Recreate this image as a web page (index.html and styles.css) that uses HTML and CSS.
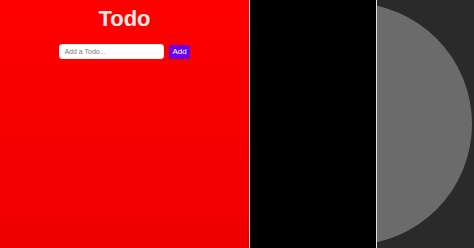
FILE: index.html
```html
<!DOCTYPE html>
<html lang="en">
<head>
  <meta charset="UTF-8">
  <meta name="viewport" content="width=device-width, initial-scale=1.0">
  <title>Todo</title>
  <link rel="stylesheet" href="styles.css">
</head>
<body>
  <div class="todo">
    <h1>Todo</h1>
    <form class="todo-form" onsubmit="return false">
      <input type="text" id="todoInput" placeholder="Add a Todo...">
      <button type="submit" class="add">Add</button>
    </form>
    <ul id="todoList"></ul>
  </div>
  <div class="dark"></div>
  <div class="gray">
    <div class="circle"></div>
  </div>
</body>
</html>
```

FILE: styles.css
```css
/* Basic styling */
* {
  box-sizing: border-box;
}
body {
  font-family: "Liberation Sans", Arial, sans-serif;
  display: flex;
  height: 248px;
  margin: 0;
  overflow: hidden;
  background-color: #2a2a2a;
}
.todo {
  width: 249px;
  flex-shrink: 0;
  background: linear-gradient(#ff0000, #ee0000);
  text-align: center;
}
.todo h1 {
  margin: 6px 0 0;
  font-size: 22px;
  line-height: 26px;
  color: #fbeaea;
}
.todo-form {
  display: flex;
  justify-content: center;
  align-items: center;
  gap: 5px;
  margin-top: 12px;
}
.todo-form input[type="text"] {
  width: 105px;
  height: 15px;
  padding: 0 4px;
  font-family: inherit;
  font-size: 7px;
  border: 1px solid #eee;
  border-radius: 3px;
  background: #fff;
}
.todo-form input::placeholder {
  color: #777;
}
.add {
  height: 14px;
  padding: 0 3px;
  font-family: inherit;
  font-size: 8px;
  color: white;
  background-color: #6a00e8;
  border: none;
  border-radius: 2px;
}
#todoList {
  margin: 0;
  padding: 0;
}
.dark {
  width: 128px;
  flex-shrink: 0;
  background: #000;
  border-left: 1px solid #d8c8c8;
  border-right: 1px solid #e2e2e2;
}
.gray {
  flex: 1;
  display: flex;
  align-items: center;
  overflow: hidden;
  background: #2a2a2a;
}
.circle {
  width: 242px;
  height: 242px;
  flex-shrink: 0;
  margin-left: -147px;
  border-radius: 50%;
  background: #6b6b6b;
}
```
